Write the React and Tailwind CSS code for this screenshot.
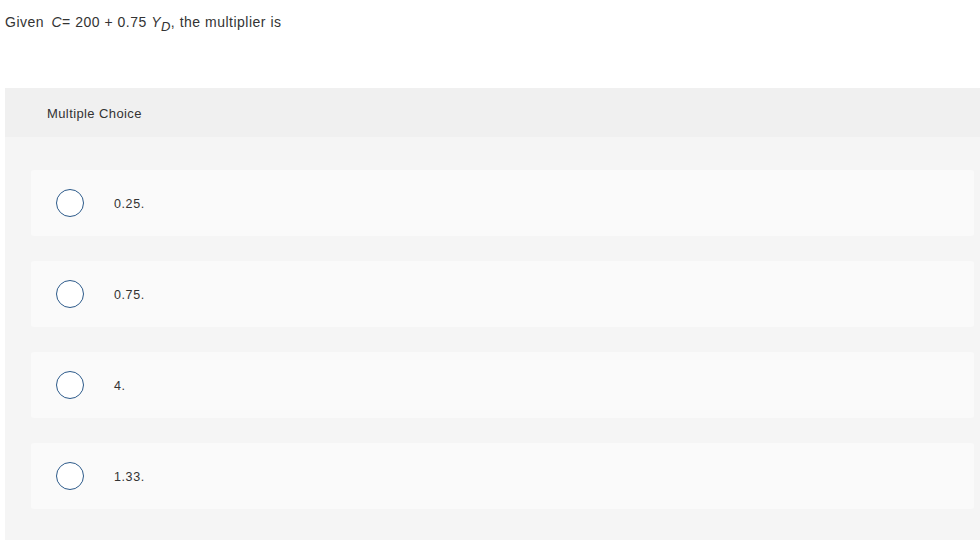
import React from 'react';

const choices = ['0.25.', '0.75.', '4.', '1.33.'];

const Choice = ({ label }) => (
  <div className="flex items-center h-[66px] bg-[#fafafa] rounded-[3px]">
    <span className="ml-[25px] w-[28px] h-[28px] rounded-full border-[1.5px] border-[#2c5a8a] bg-white shrink-0" />
    <span className="ml-[30px] pt-[2px] text-[12.5px] tracking-[0.6px] text-[#333]">{label}</span>
  </div>
);

export default function App() {
  return (
    <div
      className="w-[980px] h-[540px] overflow-hidden bg-white text-[#333]"
      style={{ fontFamily: '"Liberation Sans", Arial, sans-serif' }}
    >
      <p className="h-[32px] pl-[5px] pt-[12px] text-[14px] leading-[21px] tracking-[0.5px] whitespace-nowrap">
        Given <i className="ml-[3px]">C</i>= 200 + 0.75 <i>Y</i>
        <i className="text-[13px] relative top-[4px] leading-none">D</i>, the multiplier is
      </p>

      <div className="ml-[5px] mt-[56px] h-[460px] bg-[#f5f5f5]">
        <div className="h-[49px] bg-[#f0f0f0] flex items-center pl-[42px] pt-[2px] text-[13px] tracking-[0.4px]">
          Multiple Choice
        </div>
        <div className="pt-[33px] pl-[26px] pr-[6px] flex flex-col gap-[25px]">
          {choices.map((c) => (
            <Choice key={c} label={c} />
          ))}
        </div>
      </div>
    </div>
  );
}
